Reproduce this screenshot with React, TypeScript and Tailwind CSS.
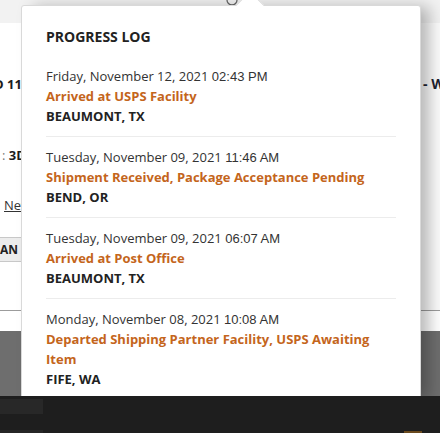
import React from 'react';

type LogEntry = {
  date: string;
  time: string;
  status: string;
  place: string;
};

const logs: LogEntry[] = [
  { date: 'Friday, November 12, 2021', time: '02:43 PM', status: 'Arrived at USPS Facility', place: 'BEAUMONT, TX' },
  { date: 'Tuesday, November 09, 2021', time: '11:46 AM', status: 'Shipment Received, Package Acceptance Pending', place: 'BEND, OR' },
  { date: 'Tuesday, November 09, 2021', time: '06:07 AM', status: 'Arrived at Post Office', place: 'BEAUMONT, TX' },
  { date: 'Monday, November 08, 2021', time: '10:08 AM', status: 'Departed Shipping Partner Facility, USPS Awaiting Item', place: 'FIFE, WA' },
];

function ProgressLog() {
  return (
    <div className="absolute left-[21px] top-[5px] z-10 w-[400px] rounded-[3px] border border-[#d9d9d9] bg-white px-[24px] pt-[21px] shadow-[10px_0_16px_-2px_rgba(0,0,0,0.28)]">
      {/* caret */}
      <div className="absolute -top-[11px] left-[218px] h-5 w-5 rotate-45 border-l border-t border-[#d9d9d9] bg-white" />
      <h3 className="relative mb-[9px] text-[14px] font-bold leading-5 text-[#222]">PROGRESS LOG</h3>
      <ul className="relative">
        {logs.map((log, i) => (
          <li key={i} className="border-b border-[#ececec] py-[10px] text-[13px] leading-5">
            <p className="text-[#333]">
              {log.date} <span className="font-['Liberation_Sans',Arial,sans-serif] leading-none">{log.time}</span>
            </p>
            <p className="font-bold text-[#c4651c]">{log.status}</p>
            <p className="font-bold text-[#222]">{log.place}</p>
          </li>
        ))}
      </ul>
    </div>
  );
}

export default function App() {
  return (
    <div className="relative h-[433px] w-[440px] overflow-hidden bg-white font-['Open_Sans',sans-serif]">
      {/* page behind the popover */}
      <div className="h-[23px] bg-[#f2f2f2]" />
      <div className="flex h-[287px] justify-between">
        <div className="w-[21px] overflow-hidden whitespace-nowrap">
          <p className="-ml-[6px] mt-[51px] text-[13px] font-bold leading-5 text-[#1c1c1c]">D 1192 8374 02</p>
          <p className="ml-[2px] mt-[51px] text-[13px] leading-5 text-[#777]">
            : <span className="font-bold text-[#1c1c1c]">3D</span>
          </p>
          <p className="ml-[4px] mt-[30px] text-[13px] leading-5 text-[#333] underline">New Order</p>
          <div className="-ml-[4px] mt-[22px] flex h-[25px] w-[80px] items-center border border-[#c8c8c8] bg-[#ececec] pl-[3px] text-[12px] font-bold text-[#222]">
            AN
          </div>
        </div>
        <div className="w-[19px] overflow-hidden whitespace-nowrap bg-[#fbfbfb]">
          <p className="ml-[2px] mt-[51px] text-[14px] font-bold leading-5 text-[#1d2330]">- W</p>
        </div>
      </div>
      <div className="h-px bg-[#9c9c9c]" />
      <div className="h-[20px]" />
      <div className="h-[65px] bg-[#6e6e6e]" />
      <footer className="relative z-20 h-[37px] bg-[#1e1e1e]">
        <div className="pt-[3px]">
          <div className="h-[15px] w-[43px] bg-[#282828]" />
        </div>
        <div className="absolute bottom-0 left-0 h-[3px] w-[43px] bg-[#262626]" />
        <div className="absolute bottom-0 left-[404px] h-[2px] w-[18px] bg-[#6a4a1e]" />
      </footer>

      {/* info icon that opened the popover */}
      <svg className="absolute -top-[6px] left-[226px] z-0" width="12" height="12" viewBox="0 0 12 12">
        <circle cx="6" cy="6" r="5" fill="none" stroke="#666" strokeWidth="1.3" />
      </svg>

      <ProgressLog />
    </div>
  );
}
